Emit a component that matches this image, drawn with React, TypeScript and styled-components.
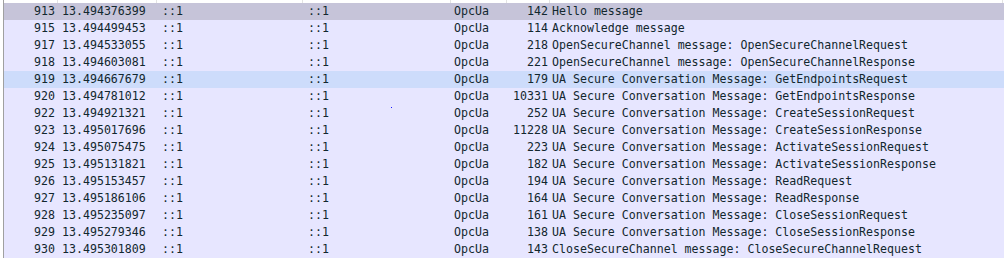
import React from "react";
import styled, { createGlobalStyle } from "styled-components";

const Global = createGlobalStyle`
  html, body { margin: 0; padding: 0; background: #ffffff; }
  body { font-family: "DejaVu Sans Mono", "Liberation Mono", monospace; }
`;

const COLS = [
  { w: 54, align: "right" as const, pl: 0, pr: 3 },
  { w: 99, align: "left" as const, pl: 4, pr: 0 },
  { w: 146, align: "left" as const, pl: 5, pr: 0 },
  { w: 148, align: "left" as const, pl: 5, pr: 0 },
  { w: 56, align: "left" as const, pl: 3, pr: 0 },
  { w: 43, align: "right" as const, pl: 0, pr: 2 },
  { w: 453, align: "left" as const, pl: 2, pr: 0 },
];

const Page = styled.div`
  position: relative;
  width: 1004px;
  height: 271px;
  background: #ffffff;
  overflow: hidden;
`;

const Panel = styled.div`
  margin-left: 3px;
  width: 1000px;
  border-left: 1px solid #a0a0a0;
  display: flex;
  flex-direction: column;
`;

const HeaderStrip = styled.div`
  display: flex;
  height: 3px;
  background: #ffffff;
`;

const HeaderCell = styled.div<{ $w: number }>`
  flex: 0 0 ${(p) => p.$w}px;
  box-sizing: border-box;
  border-right: 1px solid #e3e3e3;
`;

const Row = styled.div<{ $bg: string }>`
  display: flex;
  height: 17px;
  background: ${(p) => p.$bg};
  color: #12272e;
  font-size: 11.6px;
  line-height: 17px;
  white-space: pre;
`;

const Cell = styled.div<{ $w: number; $align: "left" | "right"; $pl: number; $pr: number }>`
  flex: 0 0 ${(p) => p.$w}px;
  box-sizing: border-box;
  text-align: ${(p) => p.$align};
  padding-left: ${(p) => p.$pl}px;
  padding-right: ${(p) => p.$pr}px;
  overflow: hidden;
`;

const Dot = styled.div`
  position: absolute;
  left: 391px;
  top: 107px;
  width: 1px;
  height: 1px;
  background: #1a1aff;
`;

type P = [string, string, string, string, string, string, string];

const rows: P[] = [
  ["913", "13.494376399", "::1", "::1", "OpcUa", "142", "Hello message"],
  ["915", "13.494499453", "::1", "::1", "OpcUa", "114", "Acknowledge message"],
  ["917", "13.494533055", "::1", "::1", "OpcUa", "218", "OpenSecureChannel message: OpenSecureChannelRequest"],
  ["918", "13.494603081", "::1", "::1", "OpcUa", "221", "OpenSecureChannel message: OpenSecureChannelResponse"],
  ["919", "13.494667679", "::1", "::1", "OpcUa", "179", "UA Secure Conversation Message: GetEndpointsRequest"],
  ["920", "13.494781012", "::1", "::1", "OpcUa", "10331", "UA Secure Conversation Message: GetEndpointsResponse"],
  ["922", "13.494921321", "::1", "::1", "OpcUa", "252", "UA Secure Conversation Message: CreateSessionRequest"],
  ["923", "13.495017696", "::1", "::1", "OpcUa", "11228", "UA Secure Conversation Message: CreateSessionResponse"],
  ["924", "13.495075475", "::1", "::1", "OpcUa", "223", "UA Secure Conversation Message: ActivateSessionRequest"],
  ["925", "13.495131821", "::1", "::1", "OpcUa", "182", "UA Secure Conversation Message: ActivateSessionResponse"],
  ["926", "13.495153457", "::1", "::1", "OpcUa", "194", "UA Secure Conversation Message: ReadRequest"],
  ["927", "13.495186106", "::1", "::1", "OpcUa", "164", "UA Secure Conversation Message: ReadResponse"],
  ["928", "13.495235097", "::1", "::1", "OpcUa", "161", "UA Secure Conversation Message: CloseSessionRequest"],
  ["929", "13.495279346", "::1", "::1", "OpcUa", "138", "UA Secure Conversation Message: CloseSessionResponse"],
  ["930", "13.495301809", "::1", "::1", "OpcUa", "143", "CloseSecureChannel message: CloseSecureChannelRequest"],
];

const bgFor = (i: number) => (i === 0 ? "#c6c4d9" : i === 4 ? "#cddcfb" : "#e7e6ff");

export default function App() {
  return (
    <Page>
      <Global />
      <Panel>
        <HeaderStrip>
          {COLS.map((c, i) => (
            <HeaderCell key={i} $w={c.w} />
          ))}
        </HeaderStrip>
        {rows.map((r, i) => (
          <Row key={r[0]} $bg={bgFor(i)}>
            {r.map((t, j) => (
              <Cell key={j} $w={COLS[j].w} $align={COLS[j].align} $pl={COLS[j].pl} $pr={COLS[j].pr}>
                {t}
              </Cell>
            ))}
          </Row>
        ))}
      </Panel>
      <Dot />
    </Page>
  );
}
